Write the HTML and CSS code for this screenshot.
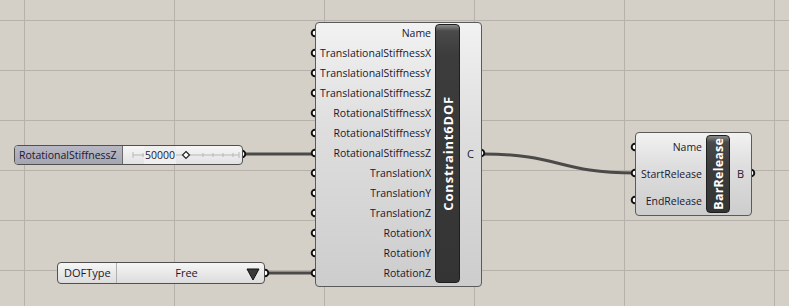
FILE: index.html
```html
<!DOCTYPE html>
<html>
<head>
<meta charset="utf-8">
<link rel="stylesheet" href="styles.css">
</head>
<body>
<div class="canvas">
  <svg class="wires" width="789" height="306" viewBox="0 0 789 306">
    <path class="wire" d="M244 154 L315 154"/>
    <path class="wire" d="M267 273 L315 273"/>
    <path class="wire" d="M483 154 C 560 154, 558 173, 635 173"/>
    <g class="grip">
      <circle cx="315" cy="33" r="3.3"/>
      <circle cx="315" cy="53" r="3.3"/>
      <circle cx="315" cy="73" r="3.3"/>
      <circle cx="315" cy="93" r="3.3"/>
      <circle cx="315" cy="113" r="3.3"/>
      <circle cx="315" cy="133" r="3.3"/>
      <circle cx="315" cy="153" r="3.3"/>
      <circle cx="315" cy="173" r="3.3"/>
      <circle cx="315" cy="193" r="3.3"/>
      <circle cx="315" cy="213" r="3.3"/>
      <circle cx="315" cy="233" r="3.3"/>
      <circle cx="315" cy="253" r="3.3"/>
      <circle cx="315" cy="273" r="3.3"/>
      <circle cx="481" cy="153" r="3.3"/>
      <circle cx="242" cy="154" r="3.3"/>
      <circle cx="265" cy="273" r="3.3"/>
      <circle cx="635" cy="147" r="3.3"/>
      <circle cx="635" cy="173" r="3.3"/>
      <circle cx="635" cy="200" r="3.3"/>
      <circle cx="751" cy="173" r="3.3"/>
    </g>
  </svg>

  <div class="comp constraint">
    <div class="inputs">
      <div class="row">Name</div>
      <div class="row">TranslationalStiffnessX</div>
      <div class="row">TranslationalStiffnessY</div>
      <div class="row">TranslationalStiffnessZ</div>
      <div class="row">RotationalStiffnessX</div>
      <div class="row">RotationalStiffnessY</div>
      <div class="row">RotationalStiffnessZ</div>
      <div class="row">TranslationX</div>
      <div class="row">TranslationY</div>
      <div class="row">TranslationZ</div>
      <div class="row">RotationX</div>
      <div class="row">RotationY</div>
      <div class="row">RotationZ</div>
    </div>
    <div class="bar"><span class="title big">Constraint6DOF</span></div>
    <div class="outputs"><div class="out">C</div></div>
  </div>

  <div class="comp barrelease">
    <div class="inputs">
      <div class="row r27">Name</div>
      <div class="row r27">StartRelease</div>
      <div class="row r27">EndRelease</div>
    </div>
    <div class="bar"><span class="title">BarRelease</span></div>
    <div class="outputs"><div class="out">B</div></div>
  </div>

  <div class="slider">
    <div class="slabel">RotationalStiffnessZ</div>
    <div class="strack">
      <svg class="ticks" width="118" height="18" viewBox="0 0 118 18">
        <path d="M10 9 H116" stroke="#b8b8b8" stroke-width="1"/>
        <path d="M10 6 V12 M20 7 V11 M30 7 V11 M40 7 V11 M80 7 V11 M90 7 V11 M100 7 V11 M110 7 V11 M116 6 V12" stroke="#b8b8b8" stroke-width="1"/>
        <path d="M63 5.5 L66.5 9 L63 12.5 L59.5 9 Z" fill="#fff" stroke="#222" stroke-width="1.2"/>
      </svg>
      <span class="sval">50000</span>
    </div>
  </div>

  <div class="vlist">
    <div class="vlabel">DOFType</div>
    <div class="vvalue">Free</div>
    <svg class="tri" width="14" height="14" viewBox="0 0 14 14">
      <path d="M1 2 H13 L7 13 Z" fill="#3a3a3a" stroke="#111" stroke-width="1"/>
    </svg>
  </div>
</div>
</body>
</html>
```

FILE: styles.css
```css
* { box-sizing: border-box; }
html, body { margin: 0; padding: 0; }
body {
  width: 789px;
  height: 306px;
  overflow: hidden;
  font-family: "Open Sans", "Noto Sans", sans-serif;
}
.canvas {
  position: relative;
  width: 789px;
  height: 306px;
  background-color: #d4d0c8;
  background-image:
    linear-gradient(to right, #b6b2ab 1px, transparent 1px),
    linear-gradient(to bottom, #b6b2ab 1px, transparent 1px);
  background-size: 150px 50px, 150px 50px;
  background-position: 24px 20px, 24px 20px;
  overflow: hidden;
}
.wires { position: absolute; left: 0; top: 0; }
.wire { fill: none; stroke: #4b4a48; stroke-width: 3; }
.grip circle { fill: #fff; stroke: #111; stroke-width: 1.9; }

.comp {
  position: absolute;
  display: flex;
  border: 1px solid #5a5a5a;
  border-radius: 4px;
  background: linear-gradient(to bottom, #f2f2f2 0%, #dedede 40%, #cdcdcd 100%);
  color: #1a1830;
  font-size: 10.5px;
}
.constraint { left: 315px; top: 22px; width: 167px; height: 265px; padding: 0 0 2px 0; }
.barrelease { left: 635px; top: 132px; width: 117px; height: 84px; }

.inputs {
  flex: 1;
  display: flex;
  flex-direction: column;
  align-items: flex-end;
  padding-right: 4px;
}
.row {
  height: 20px;
  line-height: 20px;
  white-space: nowrap;
}
.barrelease .inputs { padding-top: 1px; }
.row.r27 { height: 27px; line-height: 27px; }

.bar {
  width: 25px;
  margin: 1px 0 1px 0;
  border: 1px solid #1e1e1e;
  border-radius: 4px;
  background: linear-gradient(to bottom, #8a8a8a 0px, #4a4a4a 6px, #3c3c3c 30px, #343434 100%);
  display: flex;
  align-items: center;
  justify-content: center;
  overflow: hidden;
}
.barrelease .bar { width: 24px; margin: 2px 0 2px 0; }
.title {
  writing-mode: vertical-rl;
  transform: rotate(180deg);
  color: #fff;
  font-weight: 700;
  font-size: 12.5px;
  white-space: nowrap;
  letter-spacing: 0.2px;
}
.title.big { font-size: 13px; letter-spacing: 0.8px; }
.outputs {
  width: 21px;
  display: flex;
  flex-direction: column;
  justify-content: center;
  align-items: center;
}
.constraint .outputs { padding-top: 1px; }
.out { font-size: 11px; line-height: 20px; }

.slider {
  position: absolute;
  left: 14px;
  top: 145px;
  width: 229px;
  height: 20px;
  display: flex;
  border: 1px solid #505050;
  border-radius: 4px;
  background: linear-gradient(to bottom, #f6f6f6, #e2e2e2);
  overflow: hidden;
  font-size: 10.5px;
  color: #1a1830;
}
.slabel {
  width: 108px;
  background: linear-gradient(to bottom, #b8b8c4, #a6a6b2);
  border-right: 1px solid #6a6a6a;
  line-height: 18px;
  padding-left: 4px;
  white-space: nowrap;
}
.strack {
  flex: 1;
  position: relative;
  display: flex;
  align-items: center;
}
.ticks { position: absolute; left: 0; top: 0; }
.sval {
  position: relative;
  margin-left: 21px;
  padding: 0 1px;
  background: #efefef;
  line-height: 18px;
  font-size: 10.5px;
}

.vlist {
  position: absolute;
  left: 57px;
  top: 262px;
  width: 208px;
  height: 22px;
  display: flex;
  align-items: center;
  border: 1px solid #505050;
  border-radius: 4px;
  background: linear-gradient(to bottom, #f6f6f6, #dcdcdc);
  font-size: 11px;
  color: #1a1830;
}
.vlabel {
  width: 59px;
  height: 100%;
  line-height: 20px;
  padding-left: 6px;
  border-right: 1px solid #b0b0b0;
}
.vvalue {
  flex: 1;
  text-align: center;
  line-height: 20px;
  padding-left: 10px;
}
.tri { margin-right: 4px; margin-top: 2px; }
```
